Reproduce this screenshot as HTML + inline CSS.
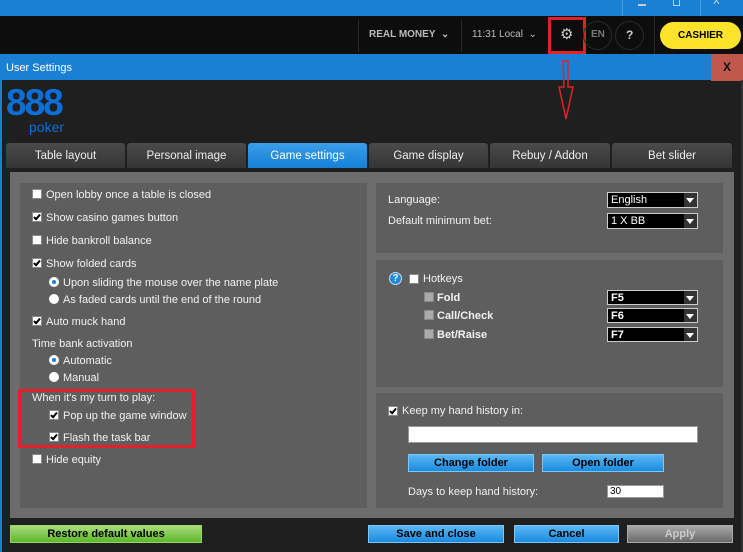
<!DOCTYPE html>
<html><head><meta charset="utf-8"><style>
*{box-sizing:border-box;margin:0;padding:0}
body{width:743px;height:552px;overflow:hidden;background:#1f1f1f;font-family:"Liberation Sans",sans-serif;font-size:11px;color:#f0f0f0;position:relative}
.a{position:absolute}
.cb{position:absolute;width:10px;height:10px;background:#fff;border:1px solid #888}
.cb.c::after{content:"";box-sizing:content-box;position:absolute;left:2px;top:0px;width:2px;height:5px;border:solid #000;border-width:0 2px 2px 0;transform:rotate(40deg)}
.rd{position:absolute;width:10px;height:10px;border-radius:50%;background:#fff}
.rd.c::after{content:"";position:absolute;left:3px;top:3px;width:4px;height:4px;border-radius:50%;background:#1a7fd6}
.t{position:absolute;white-space:nowrap;font-size:11px;color:#f2f2f2;margin-top:2px}
.tab{position:absolute;top:143px;height:25px;background:linear-gradient(#4a4a4a,#353535);border-radius:3px 3px 0 0;color:#eee;font-size:11.5px;text-align:center;line-height:26px}
.sel{position:absolute;background:#000;border:1px solid #ccc;color:#fff;font-size:11px;padding-left:3px;line-height:14px;height:16px;width:91px}
.sel::before{content:"";position:absolute;right:0;top:0;width:13px;height:100%;background:#333}
.sel::after{content:"";position:absolute;right:3px;top:5px;border:4px solid transparent;border-top:5px solid #fff}
.btn{position:absolute;height:18px;background:linear-gradient(#5ab8f5,#1a8ae0);border:1px solid #7cc6f5;color:#000;font-weight:bold;font-size:11px;text-align:center;line-height:16px}
</style></head><body>
<div class="a" style="left:0;top:0;width:743px;height:16px;background:#1a80d4"></div>
<div class="a" style="left:622px;top:0;width:1px;height:16px;background:#4a9ae0"></div>
<div class="a" style="left:700px;top:0;width:1px;height:16px;background:#4a9ae0"></div>
<div class="a" style="left:638px;top:4px;width:8px;height:2px;background:#ccc"></div>
<div class="a" style="left:673px;top:0;width:7px;height:6px;border:1px solid #ccc;border-top:none"></div>
<div class="a" style="left:713px;top:-3px;color:#ddd;font-size:10px;line-height:10px">X</div>
<div class="a" style="left:0;top:16px;width:743px;height:38px;background:#0d0d0d"></div>
<div class="a" style="left:358px;top:20px;width:1px;height:32px;background:#2a2a2a"></div>
<div class="a" style="left:461px;top:20px;width:1px;height:32px;background:#2a2a2a"></div>
<div class="t" style="left:369px;top:27px;font-size:10px;font-weight:bold;color:#bbb">REAL MONEY &nbsp;⌄</div>
<div class="t" style="left:472px;top:27px;font-size:10px;color:#bbb">11:31 Local &nbsp;⌄</div>
<div class="a" style="left:548px;top:17px;width:38px;height:37px;border:3px solid #e4202a"></div>
<div class="a" style="left:560px;top:26px;font-size:15px;color:#ccc;line-height:18px">⚙</div>
<div class="a" style="left:583px;top:21px;width:29px;height:29px;border:1px solid #2a2a2a;border-radius:50%"></div>
<div class="t" style="left:591px;top:27px;font-size:10px;color:#777;font-weight:bold">EN</div>
<div class="a" style="left:615px;top:21px;width:29px;height:29px;border:1px solid #2a2a2a;border-radius:50%"></div>
<div class="t" style="left:626px;top:26px;font-size:12px;color:#ccc;font-weight:bold">?</div>
<div class="a" style="left:654px;top:16px;width:1px;height:38px;background:#2a2a2a"></div>
<div class="a" style="left:660px;top:22px;width:81px;height:27px;background:#fde42a;border-radius:14px;color:#000;font-size:10px;font-weight:bold;text-align:center;line-height:27px">CASHIER</div>
<div class="a" style="left:0;top:54px;width:743px;height:26px;background:#1a80d4"></div>
<div class="t" style="left:6px;top:60px;color:#fff;font-size:11px">User Settings</div>
<div class="a" style="left:711px;top:54px;width:32px;height:27px;background:#c0584c;color:#111;font-weight:bold;text-align:center;line-height:27px;font-size:12px">X</div>
<div class="a" style="left:0;top:80px;width:2px;height:472px;background:#1a80d4"></div>
<div class="a" style="left:741px;top:80px;width:2px;height:472px;background:#333"></div>
<div class="a" style="left:6px;top:84px;font-size:37px;font-weight:bold;color:#0c6fd8;letter-spacing:-2px;line-height:38px">888</div>
<div class="a" style="left:29px;top:120px;font-size:14px;color:#0c6fd8;line-height:14px">poker</div>
<svg class="a" style="left:556px;top:60px" width="20" height="62"><path d="M7 1h5v26h5l-7 32-7-32h5z" fill="none" stroke="#e4202a" stroke-width="1.5"/></svg>
<div class="tab" style="left:6px;width:119px">Table layout</div>
<div class="tab" style="left:127px;width:119px">Personal image</div>
<div class="tab" style="left:248px;width:119px;background:linear-gradient(#3a9ee8,#1680d8);color:#fff">Game settings</div>
<div class="tab" style="left:369px;width:119px">Game display</div>
<div class="tab" style="left:490px;width:120px">Rebuy / Addon</div>
<div class="tab" style="left:612px;width:120px">Bet slider</div>
<div class="a" style="left:10px;top:172px;width:724px;height:346px;background:#6c6c6c"></div>
<div class="a" style="left:20px;top:183px;width:347px;height:325px;background:#5e5e5e"></div>
<div class="a" style="left:376px;top:183px;width:347px;height:70px;background:#5e5e5e"></div>
<div class="a" style="left:376px;top:260px;width:347px;height:127px;background:#5e5e5e"></div>
<div class="a" style="left:376px;top:393px;width:347px;height:115px;background:#5e5e5e"></div>

<div class="cb" style="left:32px;top:189px"></div><div class="t" style="left:46px;top:187px">Open lobby once a table is closed</div>
<div class="cb c" style="left:32px;top:212px"></div><div class="t" style="left:46px;top:210px">Show casino games button</div>
<div class="cb" style="left:32px;top:235px"></div><div class="t" style="left:46px;top:233px">Hide bankroll balance</div>
<div class="cb c" style="left:32px;top:258px"></div><div class="t" style="left:46px;top:256px">Show folded cards</div>
<div class="rd c" style="left:49px;top:277px"></div><div class="t" style="left:63px;top:275px">Upon sliding the mouse over the name plate</div>
<div class="rd" style="left:49px;top:294px"></div><div class="t" style="left:63px;top:292px">As faded cards until the end of the round</div>
<div class="cb c" style="left:32px;top:316px"></div><div class="t" style="left:46px;top:314px">Auto muck hand</div>
<div class="t" style="left:32px;top:336px">Time bank activation</div>
<div class="rd c" style="left:49px;top:355px"></div><div class="t" style="left:63px;top:353px">Automatic</div>
<div class="rd" style="left:49px;top:372px"></div><div class="t" style="left:63px;top:370px">Manual</div>
<div class="a" style="left:18px;top:389px;width:177px;height:59px;border:3px solid #e4202a"></div>
<div class="t" style="left:32px;top:390px">When it's my turn to play:</div>
<div class="cb c" style="left:49px;top:410px"></div><div class="t" style="left:63px;top:408px">Pop up the game window</div>
<div class="cb c" style="left:49px;top:432px"></div><div class="t" style="left:63px;top:430px">Flash the task bar</div>
<div class="cb" style="left:32px;top:454px"></div><div class="t" style="left:46px;top:452px">Hide equity</div>

<div class="t" style="left:388px;top:192px">Language:</div>
<div class="sel" style="left:607px;top:192px">English</div>
<div class="t" style="left:388px;top:213px">Default minimum bet:</div>
<div class="sel" style="left:607px;top:213px">1 X BB</div>
<div class="a" style="left:389px;top:272px;width:13px;height:13px;border-radius:50%;background:#1a8ae0;border:1px solid #cde;color:#fff;font-size:10px;font-weight:bold;text-align:center;line-height:11px">?</div>
<div class="cb" style="left:409px;top:274px"></div><div class="t" style="left:423px;top:271px">Hotkeys</div>
<div class="cb" style="left:424px;top:292px;background:#aaa"></div><div class="t" style="left:437px;top:290px;font-weight:bold">Fold</div>
<div class="cb" style="left:424px;top:310px;background:#aaa"></div><div class="t" style="left:437px;top:308px;font-weight:bold">Call/Check</div>
<div class="cb" style="left:424px;top:329px;background:#aaa"></div><div class="t" style="left:437px;top:327px;font-weight:bold">Bet/Raise</div>
<div class="sel" style="left:607px;top:290px;font-weight:bold;height:15px">F5</div>
<div class="sel" style="left:607px;top:308px;font-weight:bold;height:15px">F6</div>
<div class="sel" style="left:607px;top:327px;font-weight:bold;height:15px">F7</div>
<div class="cb c" style="left:388px;top:406px"></div><div class="t" style="left:402px;top:403px">Keep my hand history in:</div>
<div class="a" style="left:408px;top:426px;width:290px;height:17px;background:#fff;border:1px solid #999"></div>
<div class="btn" style="left:408px;top:454px;width:126px">Change folder</div>
<div class="btn" style="left:542px;top:454px;width:122px">Open folder</div>
<div class="t" style="left:408px;top:484px">Days to keep hand history:</div>
<div class="a" style="left:607px;top:485px;width:57px;height:13px;background:#fff;border:1px solid #999;color:#000;font-size:10px;line-height:11px;padding-left:2px">30</div>

<div class="btn" style="left:10px;top:525px;width:192px;background:linear-gradient(#a8dc7c,#5cb82a);border-color:#9bd36a">Restore default values</div>
<div class="btn" style="left:368px;top:525px;width:136px">Save and close</div>
<div class="btn" style="left:514px;top:525px;width:105px">Cancel</div>
<div class="btn" style="left:627px;top:525px;width:106px;background:linear-gradient(#a8a8a8,#6a6a6a);border-color:#aaa;color:#ccc">Apply</div>
</body></html>
